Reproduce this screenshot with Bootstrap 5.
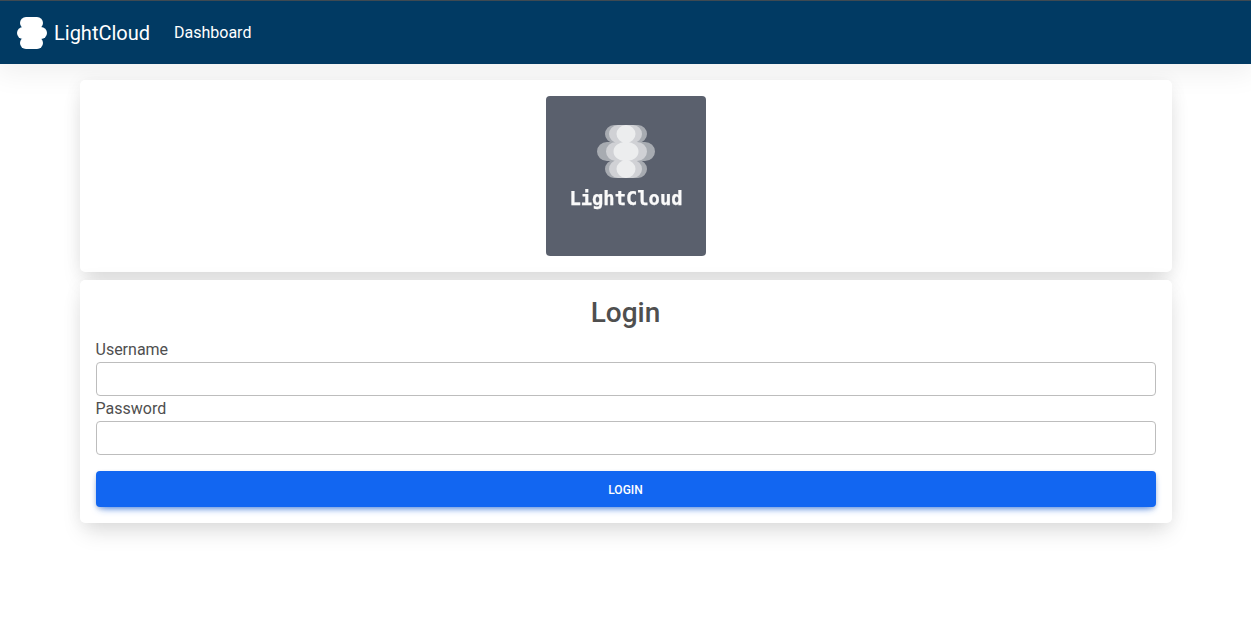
<!DOCTYPE html>
<html lang="en">
<head>
<meta charset="utf-8">
<title>LightCloud</title>
<link rel="stylesheet" href="https://cdn.jsdelivr.net/npm/bootstrap@5.3.0/dist/css/bootstrap.min.css">
<style>
body { font-family: Roboto, sans-serif; color: #4f4f4f; background: #fff; }
.lc-nav { height: 64px; background: #013a63; border-top: 1px solid #3f4a52; padding: 0 16px; box-shadow: 0 6px 28px 4px rgba(0,0,0,.06); }
.lc-nav .navbar-brand { font-size: 20px; color: #fff; margin-right: 24px; padding: 0; gap: 6px; line-height: 30px; }
.lc-nav .nav-link { color: #fff; font-size: 16px; padding: 0; }
.lc-mark { filter: blur(.7px); }
.lc-wrap { width: 1092px; margin: 16px auto 0; gap: 8px; }
.lc-panel { border: 0; border-radius: 5px; padding: 16px; background: #fff; box-shadow: 0 12px 22px -4px rgba(0,0,0,.13), 0 0 18px rgba(0,0,0,.05); }
.lc-logo { display: block; width: 160px; height: 160px; border-radius: 4px; }
.lc-logo-art { filter: blur(.6px); }
.lc-logo-text { font-family: "DejaVu Sans Mono", monospace; font-weight: 700; font-size: 18.8px; fill: #fafafa; stroke: #fafafa; stroke-width: .25px; filter: blur(.35px); }
.lc-title { font-size: 28px; font-weight: 500; line-height: 1.2; color: #4f4f4f; margin: 0 0 8px; }
.lc-label { display: block; font-size: 16px; line-height: 24px; margin: 0; color: #4f4f4f; }
.lc-input { display: block; height: 34px; border: 1px solid #bdbdbd; border-radius: 4px; padding: 4px 12px; box-shadow: none; }
.lc-field + .lc-field { margin-top: 1px; }
.lc-submit { display: block; height: 36px; margin-top: 16px; border: 0; border-radius: 4px; background: #1266f1; color: #fff; font-size: 12px; font-weight: 500; line-height: 38px; padding: 0; text-transform: uppercase; box-shadow: 0 4px 9px -4px rgba(18,102,241,.9), 0 2px 4px rgba(0,0,0,.15); }
</style>
</head>
<body class="min-vh-100">
<nav class="navbar lc-nav">
  <div class="d-flex align-items-center w-100">
    <a class="navbar-brand d-flex align-items-center" href="#">
      <svg class="lc-mark" width="32" height="34" viewBox="0 0 32 34" aria-hidden="true">
        <rect x="4" y="1" width="23" height="12" rx="6" fill="#fff"/>
        <rect x="1" y="11" width="30" height="12" rx="6" fill="#fff"/>
        <rect x="4" y="21" width="23" height="12" rx="6" fill="#fff"/>
      </svg>
      LightCloud
    </a>
    <a class="nav-link" href="#">Dashboard</a>
  </div>
</nav>
<main class="lc-wrap d-flex flex-column">
  <section class="card lc-panel align-items-center">
    <svg class="lc-logo" viewBox="0 0 160 160" role="img" aria-label="LightCloud logo">
      <rect width="160" height="160" fill="#5a606d"/>
      <g class="lc-logo-art" fill="#fff">
        <path d="M68 29h24a9 9 0 0 1 0 18h-24a9 9 0 0 1 0-18zM68 64h24a9 9 0 0 1 0 18h-24a9 9 0 0 1 0-18zM61 46h38a10 9.5 0 0 1 0 19h-38a10 9.5 0 0 1 0-19z" opacity=".47"/>
        <path d="M72 29h15a9 9 0 0 1 0 18h-15a9 9 0 0 1 0-18zM72 64h15a9 9 0 0 1 0 18h-15a9 9 0 0 1 0-18zM70 46h21a10 9.5 0 0 1 0 19h-21a10 9.5 0 0 1 0-19z" opacity=".46"/>
        <path d="M80 29a9.5 9 0 0 1 0 18a9.5 9 0 0 1 0-18zM80 64a9.5 9 0 0 1 0 18a9.5 9 0 0 1 0-18zM79 46h2a11.5 9.5 0 0 1 0 19h-2a11.5 9.5 0 0 1 0-19z" opacity=".6"/>
      </g>
      <text class="lc-logo-text" x="80" y="109" text-anchor="middle">LightCloud</text>
    </svg>
  </section>
  <section class="card lc-panel">
    <h3 class="lc-title text-center">Login</h3>
    <form>
      <div class="lc-field">
        <label class="lc-label" for="username">Username</label>
        <input class="form-control lc-input" id="username" type="text">
      </div>
      <div class="lc-field">
        <label class="lc-label" for="password">Password</label>
        <input class="form-control lc-input" id="password" type="password">
      </div>
      <button class="btn btn-primary lc-submit w-100" type="button">Login</button>
    </form>
  </section>
</main>
<script src="https://cdn.jsdelivr.net/npm/bootstrap@5.3.0/dist/js/bootstrap.bundle.min.js"></script>
</body>
</html>
